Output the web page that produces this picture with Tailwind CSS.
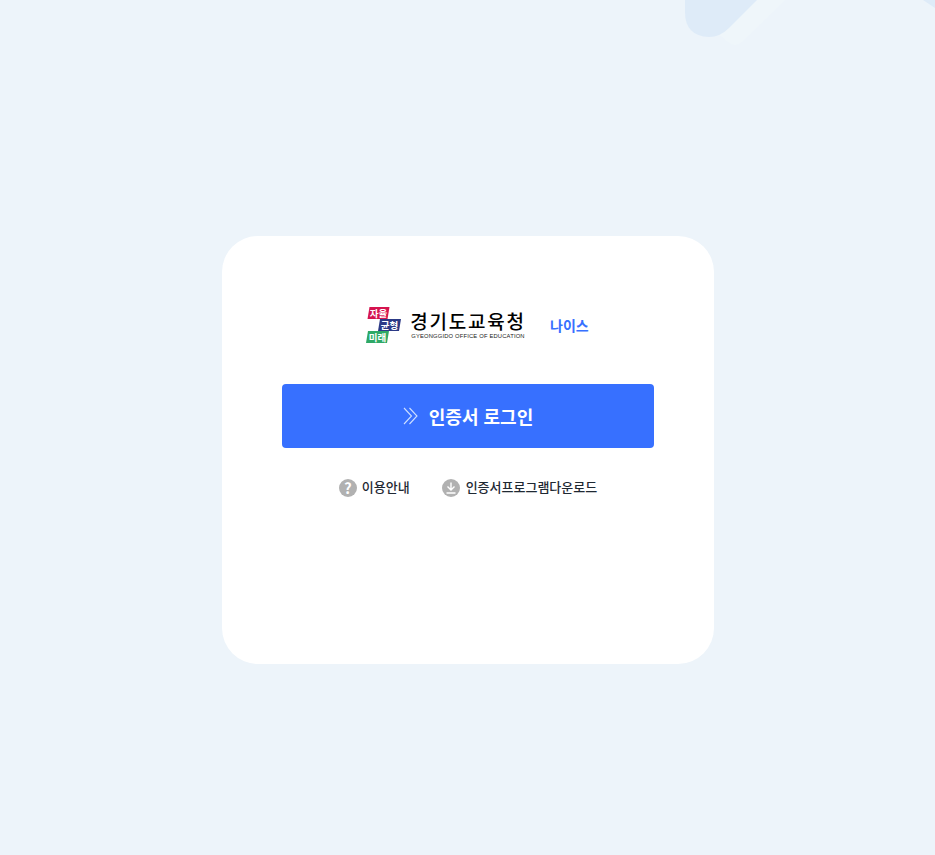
<!DOCTYPE html>
<html lang="ko"><head><meta charset="utf-8">
<script src="https://cdn.jsdelivr.net/npm/@tailwindcss/browser@4"></script>
</head>
<body class="m-0 p-0">
<div class="relative w-[935px] h-[855px] overflow-hidden bg-[#edf4fa] flex justify-center font-['Noto_Sans_CJK_KR','Noto_Sans',sans-serif]">
  <svg class="absolute left-0 top-0" width="935" height="855" viewBox="0 0 935 855">
    <path d="M757 0 L785 0 L742 42 Q735 48 728 42 L716 32 Z" fill="#eff6fa"/>
    <path d="M685 0 L757 0 L729 28 Q720 37 709 37 Q685 36 685 12 Z" fill="#deebf8"/>
    <path d="M923 0 L935 0 L935 8 Z" fill="#deebf8"/>
  </svg>
  <main class="relative mt-[236px] ml-[1px] w-[492px] h-[428px] rounded-[36px] bg-white flex flex-col items-center">
    <div class="mt-[68px] h-[44px] w-full flex items-center pl-[144px]">
      <svg width="36" height="38" viewBox="0 0 36 38" class="shrink-0 -translate-y-[1px]">
        <polygon points="3.5,1 23.5,1 21.5,13 1.5,13" fill="#d5144f"/>
        <polygon points="14,13 35,13 33,25 12,25" fill="#2c3a86"/>
        <polygon points="2,25 23,25 21,37 0,37" fill="#2ea866"/>
        <text x="12.5" y="10.5" font-size="9.5" font-weight="700" fill="#fff" text-anchor="middle">자율</text>
        <text x="23.5" y="22.5" font-size="9.5" font-weight="700" fill="#fff" text-anchor="middle">균형</text>
        <text x="11.5" y="34.5" font-size="9.5" font-weight="700" fill="#fff" text-anchor="middle">미래</text>
      </svg>
      <div class="ml-[8px] w-[116px] shrink-0 flex flex-col items-center -translate-y-[1px]">
        <span class="text-[19px] leading-[21px] font-medium text-black tracking-[1.8px] whitespace-nowrap">경기도교육청</span>
        <span class="mt-[1px] text-[5.8px] leading-[8px] text-[#222] whitespace-nowrap font-['Liberation_Sans',sans-serif] tracking-[0.18px]">GYEONGGIDO OFFICE OF EDUCATION</span>
      </div>
      <span class="ml-[24px] text-[14px] leading-[20px] font-bold text-[#3770ff] whitespace-nowrap -translate-y-[1px]">나이스</span>
    </div>
    <button class="mt-[36px] w-[372px] h-[64px] rounded-[4px] bg-[#3770ff] flex items-center justify-center text-white">
      <svg width="16" height="18" viewBox="0 0 16 18" fill="none" stroke="#cfe0ff" stroke-width="1.1" class="mr-[10px]">
        <path d="M1 1 L8.5 9 L1 17"/><path d="M6.5 1 L14 9 L6.5 17"/>
      </svg>
      <span class="text-[18px] leading-[24px] font-bold whitespace-nowrap">인증서 로그인</span>
    </button>
    <div class="mt-[30px] h-[20px] flex items-center text-[13px] leading-[20px] font-medium text-[#1f2933] whitespace-nowrap">
      <span class="w-[18px] h-[18px] rounded-full bg-[#b1b1b1] text-white text-[15px] font-bold flex items-center justify-center">?</span>
      <span class="ml-[5px] -translate-y-[1px]">이용안내</span>
      <svg width="18" height="18" viewBox="0 0 18 18" class="ml-[32px]">
        <circle cx="9" cy="9" r="9" fill="#b1b1b1"/>
        <path d="M9 3.5 V11 M5.5 7.5 L9 11 L12.5 7.5 M4.5 14 H13.5" stroke="#fff" stroke-width="1.4" fill="none"/>
      </svg>
      <span class="ml-[6px] -translate-y-[1px]">인증서프로그램다운로드</span>
    </div>
  </main>
</div>
</body></html>
